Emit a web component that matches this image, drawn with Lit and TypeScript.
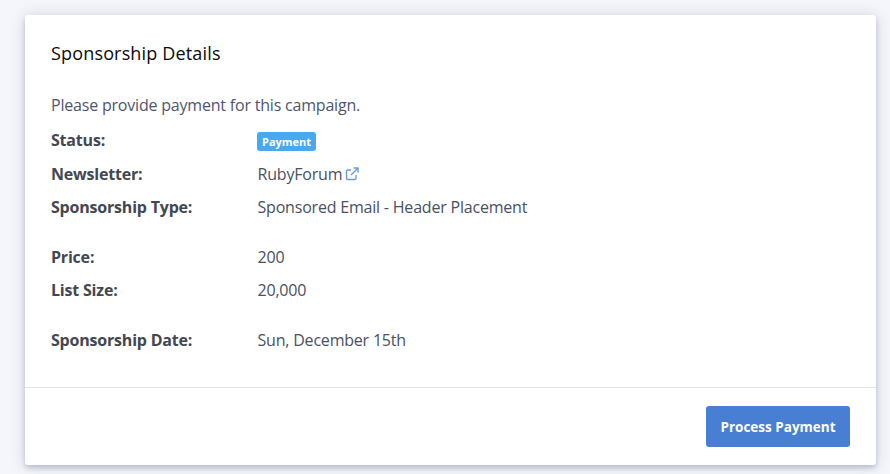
import { LitElement, html, css } from "lit";
import { customElement } from "lit/decorators.js";

@customElement("app-root")
export class AppRoot extends LitElement {
  static styles = css`
    :host {
      display: block;
      box-sizing: border-box;
      height: 474px;
      overflow: hidden;
      padding: 15px 14px 0 25px;
      background: #f5f6fb;
      font-family: "Open Sans", "Noto Sans", sans-serif;
      color: #4a4a4a;
    }
    .card {
      height: 450px;
      box-sizing: border-box;
      display: flex;
      flex-direction: column;
      background: #fff;
      border-radius: 3px;
      box-shadow: 0 1px 16px rgba(30, 40, 90, 0.16), 0 3px 5px rgba(30, 40, 90, 0.2);
    }
    .body {
      flex: 1;
      padding: 24px 26px 0;
    }
    h2 {
      margin: 0 0 25px;
      font-size: 18px;
      line-height: 28px;
      font-weight: 400;
      letter-spacing: 0.16px;
      color: #0a0a0a;
    }
    p {
      margin: 0 0 5.8px;
      font-size: 16px;
      line-height: 26px;
      letter-spacing: -0.2px;
      color: #4f5570;
    }
    .row {
      display: grid;
      grid-template-columns: 206px 1fr;
      align-items: center;
      height: 33.3px;
      font-size: 16px;
      letter-spacing: -0.2px;
    }
    .row.first {
      height: 32.9px;
      margin-bottom: 0.6px;
    }
    .row.gap {
      margin-top: 16.5px;
    }
    .label {
      font-weight: 700;
      color: #43474f;
    }
    .value {
      display: flex;
      align-items: center;
      gap: 3px;
      padding-left: 0.5px;
      color: #4a5060;
    }
    .badge {
      display: inline-block;
      margin: 2px 0 0 -0.5px;
      padding: 0 5px;
      height: 19px;
      line-height: 19px;
      border-radius: 3px;
      background: #48a9ee;
      color: #fff;
      font-size: 11px;
      font-weight: 700;
      letter-spacing: 0;
    }
    svg {
      width: 14px;
      height: 14px;
      fill: none;
      stroke: #6a9ae0;
      stroke-width: 1.4;
    }
    .footer {
      height: 78px;
      box-sizing: border-box;
      display: flex;
      justify-content: flex-end;
      align-items: flex-start;
      padding: 18px 26px 0;
      border-top: 1px solid #e4e4e6;
    }
    button {
      width: 144px;
      height: 41px;
      border: 0;
      border-radius: 3px;
      background: #487fd2;
      color: #fff;
      font: 700 13.5px "Open Sans", "Noto Sans", sans-serif;
      padding: 0;
    }
  `;

  render() {
    return html`
      <div class="card">
        <div class="body">
          <h2>Sponsorship Details</h2>
          <p>Please provide payment for this campaign.</p>
          <div class="row first">
            <div class="label">Status:</div>
            <div class="value"><span class="badge">Payment</span></div>
          </div>
          <div class="row">
            <div class="label">Newsletter:</div>
            <div class="value">
              RubyForum
              <svg viewBox="0 0 14 14">
                <path d="M11 8v3.2a1.3 1.3 0 0 1-1.3 1.3H2.8a1.3 1.3 0 0 1-1.3-1.3V4.3A1.3 1.3 0 0 1 2.8 3H6" />
                <path d="M8.5 1h4.5v4.5M13 1 6 8" />
              </svg>
            </div>
          </div>
          <div class="row">
            <div class="label">Sponsorship Type:</div>
            <div class="value">Sponsored Email - Header Placement</div>
          </div>
          <div class="row gap">
            <div class="label">Price:</div>
            <div class="value">200</div>
          </div>
          <div class="row">
            <div class="label">List Size:</div>
            <div class="value">20,000</div>
          </div>
          <div class="row gap">
            <div class="label">Sponsorship Date:</div>
            <div class="value">Sun, December 15th</div>
          </div>
        </div>
        <div class="footer"><button>Process Payment</button></div>
      </div>
    `;
  }
}
